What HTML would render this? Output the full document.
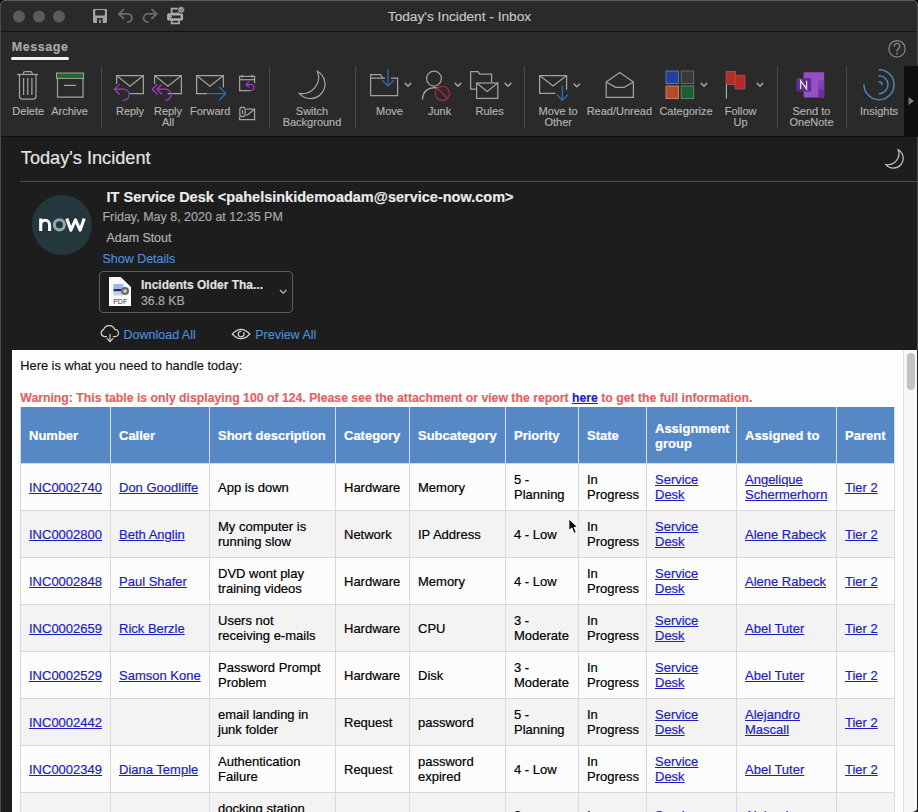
<!DOCTYPE html>
<html><head><meta charset="utf-8"><title>Today's Incident - Inbox</title>
<style>
html,body{margin:0;padding:0;width:918px;height:812px;overflow:hidden;background:#1d1d1d}
body{position:relative;font-family:"Liberation Sans", sans-serif}
.t{position:absolute;white-space:nowrap;-webkit-text-stroke:0.15px currentColor}
.r{position:absolute}
.c{-webkit-text-stroke:0.2px currentColor;position:absolute;display:flex;align-items:center;padding-left:8px;box-sizing:border-box;font-size:13px;line-height:15px;overflow:hidden}
u{text-decoration:underline;text-underline-offset:1px}
svg.ic{position:absolute;left:0;top:0}
</style></head><body>
<div class="r" style="left:0px;top:0px;width:918px;height:137px;background:#2a2a2a;"></div>
<div class="r" style="left:0px;top:31px;width:918px;height:1px;background:#121212;"></div>
<div class="r" style="left:0px;top:136px;width:918px;height:1px;background:#0c0c0c;"></div>
<div class="r" style="left:0px;top:137px;width:918px;height:675px;background:#1d1d1d;"></div>
<div class="r" style="left:0px;top:0px;width:918px;height:1px;background:#5e5e5e;"></div>
<div class="r" style="left:0px;top:0px;width:1px;height:812px;background:#4a4a4a;"></div>
<div class="r" style="left:917px;top:0px;width:1px;height:350px;background:#4a4a4a;"></div>
<div class="t" style="left:387.80px;top:9.70px;font-size:13.7px;line-height:13.7px;color:#c8c8c8;font-weight:400;">Today's Incident - Inbox</div>
<div class="t" style="left:11.80px;top:41.02px;font-size:12.5px;line-height:12.5px;color:#a9a9a9;font-weight:700;letter-spacing:0.55px">Message</div>
<div class="r" style="left:11px;top:57px;width:58px;height:3px;background:#f2f2f2;border-radius:1.5px"></div>
<div class="t" style="left:-71.75px;top:105.69px;width:200px;text-align:center;font-size:11px;line-height:11px;color:#b3b3b3;font-weight:400;">Delete</div>
<div class="t" style="left:-30.50px;top:105.69px;width:200px;text-align:center;font-size:11px;line-height:11px;color:#b3b3b3;font-weight:400;">Archive</div>
<div class="t" style="left:30.00px;top:105.69px;width:200px;text-align:center;font-size:11px;line-height:11px;color:#b3b3b3;font-weight:400;">Reply</div>
<div class="t" style="left:68.00px;top:105.69px;width:200px;text-align:center;font-size:11px;line-height:11px;color:#b3b3b3;font-weight:400;">Reply</div>
<div class="t" style="left:68.00px;top:117.29px;width:200px;text-align:center;font-size:11px;line-height:11px;color:#b3b3b3;font-weight:400;">All</div>
<div class="t" style="left:110.20px;top:105.69px;width:200px;text-align:center;font-size:11px;line-height:11px;color:#b3b3b3;font-weight:400;">Forward</div>
<div class="t" style="left:212.00px;top:105.69px;width:200px;text-align:center;font-size:11px;line-height:11px;color:#b3b3b3;font-weight:400;">Switch</div>
<div class="t" style="left:212.00px;top:117.29px;width:200px;text-align:center;font-size:11px;line-height:11px;color:#b3b3b3;font-weight:400;">Background</div>
<div class="t" style="left:289.50px;top:105.69px;width:200px;text-align:center;font-size:11px;line-height:11px;color:#b3b3b3;font-weight:400;">Move</div>
<div class="t" style="left:339.60px;top:105.69px;width:200px;text-align:center;font-size:11px;line-height:11px;color:#b3b3b3;font-weight:400;">Junk</div>
<div class="t" style="left:389.60px;top:105.69px;width:200px;text-align:center;font-size:11px;line-height:11px;color:#b3b3b3;font-weight:400;">Rules</div>
<div class="t" style="left:458.20px;top:105.69px;width:200px;text-align:center;font-size:11px;line-height:11px;color:#b3b3b3;font-weight:400;">Move to</div>
<div class="t" style="left:458.20px;top:117.29px;width:200px;text-align:center;font-size:11px;line-height:11px;color:#b3b3b3;font-weight:400;">Other</div>
<div class="t" style="left:519.40px;top:105.69px;width:200px;text-align:center;font-size:11px;line-height:11px;color:#b3b3b3;font-weight:400;">Read/Unread</div>
<div class="t" style="left:586.00px;top:105.69px;width:200px;text-align:center;font-size:11px;line-height:11px;color:#b3b3b3;font-weight:400;">Categorize</div>
<div class="t" style="left:640.60px;top:105.69px;width:200px;text-align:center;font-size:11px;line-height:11px;color:#b3b3b3;font-weight:400;">Follow</div>
<div class="t" style="left:640.60px;top:117.29px;width:200px;text-align:center;font-size:11px;line-height:11px;color:#b3b3b3;font-weight:400;">Up</div>
<div class="t" style="left:711.50px;top:105.69px;width:200px;text-align:center;font-size:11px;line-height:11px;color:#b3b3b3;font-weight:400;">Send to</div>
<div class="t" style="left:711.50px;top:117.29px;width:200px;text-align:center;font-size:11px;line-height:11px;color:#b3b3b3;font-weight:400;">OneNote</div>
<div class="t" style="left:779.00px;top:105.69px;width:200px;text-align:center;font-size:11px;line-height:11px;color:#b3b3b3;font-weight:400;">Insights</div>
<div class="r" style="left:101px;top:66px;width:1px;height:62px;background:#4a4a4a;"></div>
<div class="r" style="left:269px;top:66px;width:1px;height:62px;background:#4a4a4a;"></div>
<div class="r" style="left:355px;top:66px;width:1px;height:62px;background:#4a4a4a;"></div>
<div class="r" style="left:524px;top:66px;width:1px;height:62px;background:#4a4a4a;"></div>
<div class="r" style="left:777px;top:66px;width:1px;height:62px;background:#4a4a4a;"></div>
<div class="r" style="left:846px;top:66px;width:1px;height:62px;background:#4a4a4a;"></div>
<div class="r" style="left:904px;top:66px;width:14px;height:71px;background:#0f0f0f;"></div>
<div class="t" style="left:20.80px;top:149.49px;font-size:18.2px;line-height:18.2px;color:#e6e6e6;font-weight:400;">Today's Incident</div>
<div class="r" style="left:20px;top:181px;width:898px;height:1px;background:#4d4d4d;"></div>
<div class="t" style="left:106.60px;top:189.73px;font-size:14.5px;line-height:14.5px;color:#ececec;font-weight:700;">IT Service Desk &lt;pahelsinkidemoadam@service-now.com&gt;</div>
<div class="t" style="left:102.40px;top:210.62px;font-size:12.5px;line-height:12.5px;color:#ababab;font-weight:400;">Friday, May 8, 2020 at 12:35 PM</div>
<div class="t" style="left:106.60px;top:232.10px;font-size:12.4px;line-height:12.4px;color:#b5b5b5;font-weight:400;">Adam Stout</div>
<div class="t" style="left:102.40px;top:252.92px;font-size:12.5px;line-height:12.5px;color:#4a8fdc;font-weight:400;">Show Details</div>
<div class="r" style="left:99px;top:271px;width:192px;height:40px;border:1px solid #5a5a5a;border-radius:4px"></div>
<div class="t" style="left:141.00px;top:278.84px;font-size:12px;line-height:12px;color:#e2e2e2;font-weight:700;">Incidents Older Tha...</div>
<div class="t" style="left:141.00px;top:294.89px;font-size:12.3px;line-height:12.3px;color:#a9a9a9;font-weight:400;">36.8 KB</div>
<div class="t" style="left:123.50px;top:329.42px;font-size:12.5px;line-height:12.5px;color:#4a8fdc;font-weight:400;">Download All</div>
<div class="t" style="left:255.20px;top:329.42px;font-size:12.5px;line-height:12.5px;color:#4a8fdc;font-weight:400;">Preview All</div>
<div class="r" style="left:12px;top:350px;width:891px;height:462px;background:#fdfdfd;"></div>
<div class="r" style="left:903px;top:350px;width:14px;height:462px;background:#f7f7f7;"></div>
<div class="r" style="left:903px;top:350px;width:1px;height:462px;background:#e2e2e2;"></div>
<div class="r" style="left:907px;top:353px;width:8px;height:37px;background:#c3c3c3;border-radius:4px"></div>
<div class="t" style="left:20.30px;top:360.36px;font-size:12.8px;line-height:12.8px;color:#111;font-weight:400;">Here is what you need to handle today:</div>
<div class="t" style="left:20.30px;top:391.63px;font-size:12.25px;line-height:12.25px;color:#e5605f;font-weight:700;">Warning: This table is only displaying 100 of 124. Please see the attachment or view the report <span style="color:#1d1dc4;text-decoration:underline">here</span> to get the full information.</div>
<div class="r" style="left:20px;top:407px;width:874px;height:56px;background:#5688c6;"></div>
<div class="r" style="left:20px;top:463px;width:874px;height:47px;background:#fcfcfc;"></div>
<div class="r" style="left:20px;top:510px;width:874px;height:47px;background:#f3f3f4;"></div>
<div class="r" style="left:20px;top:557px;width:874px;height:47px;background:#fcfcfc;"></div>
<div class="r" style="left:20px;top:604px;width:874px;height:47px;background:#f3f3f4;"></div>
<div class="r" style="left:20px;top:651px;width:874px;height:47px;background:#fcfcfc;"></div>
<div class="r" style="left:20px;top:698px;width:874px;height:47px;background:#f3f3f4;"></div>
<div class="r" style="left:20px;top:745px;width:874px;height:47px;background:#fcfcfc;"></div>
<div class="r" style="left:20px;top:792px;width:874px;height:61px;background:#f3f3f4;"></div>
<div class="c" style="left:21px;top:408px;width:89px;height:55px;color:#ffffff;font-weight:700;"><div>Number</div></div>
<div class="c" style="left:111px;top:408px;width:98px;height:55px;color:#ffffff;font-weight:700;"><div>Caller</div></div>
<div class="c" style="left:210px;top:408px;width:125px;height:55px;color:#ffffff;font-weight:700;"><div>Short description</div></div>
<div class="c" style="left:336px;top:408px;width:73px;height:55px;color:#ffffff;font-weight:700;"><div>Category</div></div>
<div class="c" style="left:410px;top:408px;width:95px;height:55px;color:#ffffff;font-weight:700;"><div>Subcategory</div></div>
<div class="c" style="left:506px;top:408px;width:72px;height:55px;color:#ffffff;font-weight:700;"><div>Priority</div></div>
<div class="c" style="left:579px;top:408px;width:67px;height:55px;color:#ffffff;font-weight:700;"><div>State</div></div>
<div class="c" style="left:647px;top:408px;width:89px;height:55px;color:#ffffff;font-weight:700;"><div>Assignment<br>group</div></div>
<div class="c" style="left:737px;top:408px;width:99px;height:55px;color:#ffffff;font-weight:700;"><div>Assigned to</div></div>
<div class="c" style="left:837px;top:408px;width:57px;height:55px;color:#ffffff;font-weight:700;"><div>Parent</div></div>
<div class="c" style="left:21px;top:464px;width:89px;height:46px;color:#1e1ebe;font-weight:400;"><div><u>INC0002740</u></div></div>
<div class="c" style="left:111px;top:464px;width:98px;height:46px;color:#1e1ebe;font-weight:400;"><div><u>Don Goodliffe</u></div></div>
<div class="c" style="left:210px;top:464px;width:125px;height:46px;color:#000;font-weight:400;"><div>App is down</div></div>
<div class="c" style="left:336px;top:464px;width:73px;height:46px;color:#000;font-weight:400;"><div>Hardware</div></div>
<div class="c" style="left:410px;top:464px;width:95px;height:46px;color:#000;font-weight:400;"><div>Memory</div></div>
<div class="c" style="left:506px;top:464px;width:72px;height:46px;color:#000;font-weight:400;"><div>5 -<br>Planning</div></div>
<div class="c" style="left:579px;top:464px;width:67px;height:46px;color:#000;font-weight:400;"><div>In<br>Progress</div></div>
<div class="c" style="left:647px;top:464px;width:89px;height:46px;color:#1e1ebe;font-weight:400;"><div><u>Service<br>Desk</u></div></div>
<div class="c" style="left:737px;top:464px;width:99px;height:46px;color:#1e1ebe;font-weight:400;"><div><u>Angelique<br>Schermerhorn</u></div></div>
<div class="c" style="left:837px;top:464px;width:57px;height:46px;color:#1e1ebe;font-weight:400;"><div><u>Tier 2</u></div></div>
<div class="c" style="left:21px;top:511px;width:89px;height:46px;color:#1e1ebe;font-weight:400;"><div><u>INC0002800</u></div></div>
<div class="c" style="left:111px;top:511px;width:98px;height:46px;color:#1e1ebe;font-weight:400;"><div><u>Beth Anglin</u></div></div>
<div class="c" style="left:210px;top:511px;width:125px;height:46px;color:#000;font-weight:400;"><div>My computer is<br>running slow</div></div>
<div class="c" style="left:336px;top:511px;width:73px;height:46px;color:#000;font-weight:400;"><div>Network</div></div>
<div class="c" style="left:410px;top:511px;width:95px;height:46px;color:#000;font-weight:400;"><div>IP Address</div></div>
<div class="c" style="left:506px;top:511px;width:72px;height:46px;color:#000;font-weight:400;"><div>4 - Low</div></div>
<div class="c" style="left:579px;top:511px;width:67px;height:46px;color:#000;font-weight:400;"><div>In<br>Progress</div></div>
<div class="c" style="left:647px;top:511px;width:89px;height:46px;color:#1e1ebe;font-weight:400;"><div><u>Service<br>Desk</u></div></div>
<div class="c" style="left:737px;top:511px;width:99px;height:46px;color:#1e1ebe;font-weight:400;"><div><u>Alene Rabeck</u></div></div>
<div class="c" style="left:837px;top:511px;width:57px;height:46px;color:#1e1ebe;font-weight:400;"><div><u>Tier 2</u></div></div>
<div class="c" style="left:21px;top:558px;width:89px;height:46px;color:#1e1ebe;font-weight:400;"><div><u>INC0002848</u></div></div>
<div class="c" style="left:111px;top:558px;width:98px;height:46px;color:#1e1ebe;font-weight:400;"><div><u>Paul Shafer</u></div></div>
<div class="c" style="left:210px;top:558px;width:125px;height:46px;color:#000;font-weight:400;"><div>DVD wont play<br>training videos</div></div>
<div class="c" style="left:336px;top:558px;width:73px;height:46px;color:#000;font-weight:400;"><div>Hardware</div></div>
<div class="c" style="left:410px;top:558px;width:95px;height:46px;color:#000;font-weight:400;"><div>Memory</div></div>
<div class="c" style="left:506px;top:558px;width:72px;height:46px;color:#000;font-weight:400;"><div>4 - Low</div></div>
<div class="c" style="left:579px;top:558px;width:67px;height:46px;color:#000;font-weight:400;"><div>In<br>Progress</div></div>
<div class="c" style="left:647px;top:558px;width:89px;height:46px;color:#1e1ebe;font-weight:400;"><div><u>Service<br>Desk</u></div></div>
<div class="c" style="left:737px;top:558px;width:99px;height:46px;color:#1e1ebe;font-weight:400;"><div><u>Alene Rabeck</u></div></div>
<div class="c" style="left:837px;top:558px;width:57px;height:46px;color:#1e1ebe;font-weight:400;"><div><u>Tier 2</u></div></div>
<div class="c" style="left:21px;top:605px;width:89px;height:46px;color:#1e1ebe;font-weight:400;"><div><u>INC0002659</u></div></div>
<div class="c" style="left:111px;top:605px;width:98px;height:46px;color:#1e1ebe;font-weight:400;"><div><u>Rick Berzle</u></div></div>
<div class="c" style="left:210px;top:605px;width:125px;height:46px;color:#000;font-weight:400;"><div>Users not<br>receiving e-mails</div></div>
<div class="c" style="left:336px;top:605px;width:73px;height:46px;color:#000;font-weight:400;"><div>Hardware</div></div>
<div class="c" style="left:410px;top:605px;width:95px;height:46px;color:#000;font-weight:400;"><div>CPU</div></div>
<div class="c" style="left:506px;top:605px;width:72px;height:46px;color:#000;font-weight:400;"><div>3 -<br>Moderate</div></div>
<div class="c" style="left:579px;top:605px;width:67px;height:46px;color:#000;font-weight:400;"><div>In<br>Progress</div></div>
<div class="c" style="left:647px;top:605px;width:89px;height:46px;color:#1e1ebe;font-weight:400;"><div><u>Service<br>Desk</u></div></div>
<div class="c" style="left:737px;top:605px;width:99px;height:46px;color:#1e1ebe;font-weight:400;"><div><u>Abel Tuter</u></div></div>
<div class="c" style="left:837px;top:605px;width:57px;height:46px;color:#1e1ebe;font-weight:400;"><div><u>Tier 2</u></div></div>
<div class="c" style="left:21px;top:652px;width:89px;height:46px;color:#1e1ebe;font-weight:400;"><div><u>INC0002529</u></div></div>
<div class="c" style="left:111px;top:652px;width:98px;height:46px;color:#1e1ebe;font-weight:400;"><div><u>Samson Kone</u></div></div>
<div class="c" style="left:210px;top:652px;width:125px;height:46px;color:#000;font-weight:400;"><div>Password Prompt<br>Problem</div></div>
<div class="c" style="left:336px;top:652px;width:73px;height:46px;color:#000;font-weight:400;"><div>Hardware</div></div>
<div class="c" style="left:410px;top:652px;width:95px;height:46px;color:#000;font-weight:400;"><div>Disk</div></div>
<div class="c" style="left:506px;top:652px;width:72px;height:46px;color:#000;font-weight:400;"><div>3 -<br>Moderate</div></div>
<div class="c" style="left:579px;top:652px;width:67px;height:46px;color:#000;font-weight:400;"><div>In<br>Progress</div></div>
<div class="c" style="left:647px;top:652px;width:89px;height:46px;color:#1e1ebe;font-weight:400;"><div><u>Service<br>Desk</u></div></div>
<div class="c" style="left:737px;top:652px;width:99px;height:46px;color:#1e1ebe;font-weight:400;"><div><u>Abel Tuter</u></div></div>
<div class="c" style="left:837px;top:652px;width:57px;height:46px;color:#1e1ebe;font-weight:400;"><div><u>Tier 2</u></div></div>
<div class="c" style="left:21px;top:699px;width:89px;height:46px;color:#1e1ebe;font-weight:400;"><div><u>INC0002442</u></div></div>
<div class="c" style="left:111px;top:699px;width:98px;height:46px;color:#000;font-weight:400;"><div></div></div>
<div class="c" style="left:210px;top:699px;width:125px;height:46px;color:#000;font-weight:400;"><div>email landing in<br>junk folder</div></div>
<div class="c" style="left:336px;top:699px;width:73px;height:46px;color:#000;font-weight:400;"><div>Request</div></div>
<div class="c" style="left:410px;top:699px;width:95px;height:46px;color:#000;font-weight:400;"><div>password</div></div>
<div class="c" style="left:506px;top:699px;width:72px;height:46px;color:#000;font-weight:400;"><div>5 -<br>Planning</div></div>
<div class="c" style="left:579px;top:699px;width:67px;height:46px;color:#000;font-weight:400;"><div>In<br>Progress</div></div>
<div class="c" style="left:647px;top:699px;width:89px;height:46px;color:#1e1ebe;font-weight:400;"><div><u>Service<br>Desk</u></div></div>
<div class="c" style="left:737px;top:699px;width:99px;height:46px;color:#1e1ebe;font-weight:400;"><div><u>Alejandro<br>Mascall</u></div></div>
<div class="c" style="left:837px;top:699px;width:57px;height:46px;color:#1e1ebe;font-weight:400;"><div><u>Tier 2</u></div></div>
<div class="c" style="left:21px;top:746px;width:89px;height:46px;color:#1e1ebe;font-weight:400;"><div><u>INC0002349</u></div></div>
<div class="c" style="left:111px;top:746px;width:98px;height:46px;color:#1e1ebe;font-weight:400;"><div><u>Diana Temple</u></div></div>
<div class="c" style="left:210px;top:746px;width:125px;height:46px;color:#000;font-weight:400;"><div>Authentication<br>Failure</div></div>
<div class="c" style="left:336px;top:746px;width:73px;height:46px;color:#000;font-weight:400;"><div>Request</div></div>
<div class="c" style="left:410px;top:746px;width:95px;height:46px;color:#000;font-weight:400;"><div>password<br>expired</div></div>
<div class="c" style="left:506px;top:746px;width:72px;height:46px;color:#000;font-weight:400;"><div>4 - Low</div></div>
<div class="c" style="left:579px;top:746px;width:67px;height:46px;color:#000;font-weight:400;"><div>In<br>Progress</div></div>
<div class="c" style="left:647px;top:746px;width:89px;height:46px;color:#1e1ebe;font-weight:400;"><div><u>Service<br>Desk</u></div></div>
<div class="c" style="left:737px;top:746px;width:99px;height:46px;color:#1e1ebe;font-weight:400;"><div><u>Abel Tuter</u></div></div>
<div class="c" style="left:837px;top:746px;width:57px;height:46px;color:#1e1ebe;font-weight:400;"><div><u>Tier 2</u></div></div>
<div class="c" style="left:21px;top:793px;width:89px;height:60px;color:#1e1ebe;font-weight:400;"><div><u>INC0002330</u></div></div>
<div class="c" style="left:111px;top:793px;width:98px;height:60px;color:#1e1ebe;font-weight:400;"><div><u>Bow Ruggeri</u></div></div>
<div class="c" style="left:210px;top:793px;width:125px;height:60px;color:#000;font-weight:400;"><div>docking station<br>not working<br>properly</div></div>
<div class="c" style="left:336px;top:793px;width:73px;height:60px;color:#000;font-weight:400;"><div>Hardware</div></div>
<div class="c" style="left:410px;top:793px;width:95px;height:60px;color:#000;font-weight:400;"><div>Dock</div></div>
<div class="c" style="left:506px;top:793px;width:72px;height:60px;color:#000;font-weight:400;"><div>3 -<br>Moderate</div></div>
<div class="c" style="left:579px;top:793px;width:67px;height:60px;color:#000;font-weight:400;"><div>In<br>Progress</div></div>
<div class="c" style="left:647px;top:793px;width:89px;height:60px;color:#1e1ebe;font-weight:400;"><div><u>Service<br>Desk</u></div></div>
<div class="c" style="left:737px;top:793px;width:99px;height:60px;color:#1e1ebe;font-weight:400;"><div><u>Alejandro<br>Mascall</u></div></div>
<div class="c" style="left:837px;top:793px;width:57px;height:60px;color:#1e1ebe;font-weight:400;"><div><u>Tier 2</u></div></div>
<div class="r" style="left:20px;top:407px;width:1px;height:405px;background:#d9d9dd;"></div>
<div class="r" style="left:110px;top:407px;width:1px;height:405px;background:#d9d9dd;"></div>
<div class="r" style="left:209px;top:407px;width:1px;height:405px;background:#d9d9dd;"></div>
<div class="r" style="left:335px;top:407px;width:1px;height:405px;background:#d9d9dd;"></div>
<div class="r" style="left:409px;top:407px;width:1px;height:405px;background:#d9d9dd;"></div>
<div class="r" style="left:505px;top:407px;width:1px;height:405px;background:#d9d9dd;"></div>
<div class="r" style="left:578px;top:407px;width:1px;height:405px;background:#d9d9dd;"></div>
<div class="r" style="left:646px;top:407px;width:1px;height:405px;background:#d9d9dd;"></div>
<div class="r" style="left:736px;top:407px;width:1px;height:405px;background:#d9d9dd;"></div>
<div class="r" style="left:836px;top:407px;width:1px;height:405px;background:#d9d9dd;"></div>
<div class="r" style="left:894px;top:407px;width:1px;height:405px;background:#d9d9dd;"></div>
<div class="r" style="left:20px;top:463px;width:875px;height:1px;background:#d9d9dd;"></div>
<div class="r" style="left:20px;top:510px;width:875px;height:1px;background:#d9d9dd;"></div>
<div class="r" style="left:20px;top:557px;width:875px;height:1px;background:#d9d9dd;"></div>
<div class="r" style="left:20px;top:604px;width:875px;height:1px;background:#d9d9dd;"></div>
<div class="r" style="left:20px;top:651px;width:875px;height:1px;background:#d9d9dd;"></div>
<div class="r" style="left:20px;top:698px;width:875px;height:1px;background:#d9d9dd;"></div>
<div class="r" style="left:20px;top:745px;width:875px;height:1px;background:#d9d9dd;"></div>
<div class="r" style="left:20px;top:792px;width:875px;height:1px;background:#d9d9dd;"></div>
<div class="r" style="left:20px;top:853px;width:875px;height:1px;background:#d9d9dd;"></div>
<div class="r" style="left:110px;top:407px;width:1px;height:56px;background:#d6e2f0;"></div>
<div class="r" style="left:209px;top:407px;width:1px;height:56px;background:#d6e2f0;"></div>
<div class="r" style="left:335px;top:407px;width:1px;height:56px;background:#d6e2f0;"></div>
<div class="r" style="left:409px;top:407px;width:1px;height:56px;background:#d6e2f0;"></div>
<div class="r" style="left:505px;top:407px;width:1px;height:56px;background:#d6e2f0;"></div>
<div class="r" style="left:578px;top:407px;width:1px;height:56px;background:#d6e2f0;"></div>
<div class="r" style="left:646px;top:407px;width:1px;height:56px;background:#d6e2f0;"></div>
<div class="r" style="left:736px;top:407px;width:1px;height:56px;background:#d6e2f0;"></div>
<div class="r" style="left:836px;top:407px;width:1px;height:56px;background:#d6e2f0;"></div>
<svg class="ic" width="918" height="812" viewBox="0 0 918 812">
<!-- traffic lights -->
<circle cx="19" cy="16.5" r="6" fill="#5b5b5b"/>
<circle cx="39" cy="16.5" r="6" fill="#5b5b5b"/>
<circle cx="59" cy="16.5" r="6" fill="#5b5b5b"/>
<!-- save -->
<rect x="93" y="9" width="14" height="14" rx="1" fill="#a4a4a4"/>
<rect x="95.2" y="10" width="9.7" height="5.4" rx="1" fill="#2b2b2b"/>
<rect x="97" y="18" width="5.7" height="5" fill="#2b2b2b"/>
<rect x="99.2" y="19.6" width="1.6" height="3.4" fill="#a4a4a4"/>
<!-- undo / redo -->
<g fill="none" stroke="#6c6c6c" stroke-width="1.9" stroke-linecap="round" stroke-linejoin="round">
<path d="M123.5 9.6 L118.8 13.9 L123.5 18.3 M118.8 13.9 H127.8 A4.1 4.1 0 0 1 127.8 22.1 H127.6"/>
<path d="M152 9.6 L156.7 13.9 L152 18.3 M156.7 13.9 H147.7 A4.1 4.1 0 0 0 147.7 22.1 H147.9"/>
</g>
<!-- printer -->
<g fill="none" stroke="#adadad" stroke-width="1.7">
<rect x="171.6" y="8.6" width="7" height="5"/>
<rect x="171.6" y="19.8" width="7.5" height="3.6"/>
</g>
<path d="M168.8 13.2 H181.4 A1.7 1.7 0 0 1 183.1 14.9 V18.9 A1.7 1.7 0 0 1 181.4 20.6 H168.8 A1.7 1.7 0 0 1 167.1 18.9 V14.9 A1.7 1.7 0 0 1 168.8 13.2 Z M170.6 15.4 V18.3 H180.6 V15.4 Z" fill="#adadad" fill-rule="evenodd"/>
<circle cx="171.3" cy="16.5" r="0.7" fill="#cfcfcf"/>
<circle cx="181.2" cy="9.8" r="3.3" fill="#a8a8a8" stroke="#2b2b2b" stroke-width="0.8"/>
<path d="M179.6 9.9 L180.8 11 L182.8 8.7" fill="none" stroke="#3a3a3a" stroke-width="0.9"/>
<!-- help -->
<circle cx="897" cy="48.8" r="8.2" fill="none" stroke="#8c8c8c" stroke-width="1.2"/>
<path d="M894.2 46.2 A2.8 2.8 0 1 1 898.6 48.5 Q897 49.5 897 51" fill="none" stroke="#8c8c8c" stroke-width="1.3" stroke-linecap="round"/>
<circle cx="897" cy="53.6" r="0.85" fill="#8c8c8c"/>

<g fill="none" stroke="#a2a2a2" stroke-width="1.25">
<!-- trash -->
<path d="M23.5 74.5 V73 Q23.5 71.5 25 71.5 H30.5 Q32 71.5 32 73 V74.5"/>
<path d="M17 74.5 H38"/>
<path d="M19.5 74.5 V96.2 Q19.5 99 22.3 99 H33.2 Q36 99 36 96.2 V74.5"/>
<path d="M23.6 78 V95 M27.75 78 V95 M31.9 78 V95"/>
<!-- archive -->
<path d="M57.5 78.6 V97 H83 V78.6"/>
<path d="M64 85.4 H76"/>
<!-- reply envelope -->
<path d="M116.6 84 V75.6 H143.4 V93.6 H129.6"/>
<path d="M116.6 75.6 L130 86.2 L143.4 75.6"/>
<!-- reply all envelope -->
<path d="M154.6 84 V75.6 H181.4 V93.6 H167.6"/>
<path d="M154.6 75.6 L168 86.2 L181.4 75.6"/>
<!-- forward envelope -->
<path d="M207 93.6 H196.6 V75.6 H223.4 V87.5"/>
<path d="M196.6 75.6 L210 86.2 L223.4 75.6"/>
<!-- calendar -->
<path d="M250.6 90.6 H239.6 V76.4 H254.6 V83.2"/>
<path d="M239.6 79.7 H254.6"/>
<path d="M242.3 74.8 V77.6 M251.9 74.8 V77.6"/>
<!-- attach mail -->
<path d="M239.8 109.9 A2.7 2.7 0 0 1 245.2 109.9 V114 A2.7 2.7 0 0 1 239.8 114 Z"/>
<path d="M242.5 109.8 V114.2"/>
<path d="M246.4 109.2 H254.6 V119.6 H239.6 V116.6"/>
<path d="M246.6 115.4 L254.3 109.6"/>
<!-- moon -->
<path d="M317.4 71.3 A14.5 14.5 0 1 1 299.3 93.3 A16.3 16.3 0 0 0 317.4 71.3 Z"/>
<!-- move folder -->
<path d="M385 78 H370.6 V95.6 H397.6 V78 H391"/>
<path d="M370.6 78 V74.6 H380.6 L382.6 78"/>
<!-- junk person -->
<circle cx="434" cy="78.6" r="7.4"/>
<path d="M422.4 99.6 Q423 88.4 434 87.6 Q437 87.7 438.2 88.2"/>
<!-- rules -->
<path d="M476 89 H470.6 V71.6 H478.2 L479.6 74.2 H491.6 V82.4"/>
<rect x="476.6" y="83" width="21.2" height="15.4"/>
<path d="M476.6 83 L487.2 91.5 L497.8 83"/>
<!-- move to other envelope -->
<path d="M555.4 93.4 H539.6 V75.6 H566.6 V89.8"/>
<path d="M539.6 75.6 L553.1 86 L566.6 75.6"/>
<!-- read/unread -->
<path d="M606.2 82 L619.8 72.4 L633.4 82 V97.4 H606.2 Z"/>
<path d="M606.2 82 L615.6 87.4 H624 L633.4 82"/>
<!-- header moon -->
<g transform="translate(886 149.8) scale(0.67) translate(-299.3 -71.3)"><path d="M317.4 71.3 A14.5 14.5 0 1 1 299.3 93.3 A16.3 16.3 0 0 0 317.4 71.3 Z" stroke="#c4c4c4" stroke-width="1.8"/></g>
</g>
<!-- chevrons -->
<g fill="none" stroke="#a2a2a2" stroke-width="1.5" stroke-linecap="round" stroke-linejoin="round">
<path d="M405.2 83.4 L408 86.2 L410.8 83.4"/>
<path d="M455.2 83.4 L458 86.2 L460.8 83.4"/>
<path d="M505.2 83.4 L508 86.2 L510.8 83.4"/>
<path d="M574 84 L576.8 86.8 L579.6 84"/>
<path d="M701.2 83.4 L704 86.2 L706.8 83.4"/>
<path d="M757.2 83.4 L760 86.2 L762.8 83.4"/>
<path d="M280.4 290.4 L283.2 293.2 L286 290.4"/>
</g>
<!-- archive green bar -->
<rect x="56.5" y="73" width="27" height="5.4" fill="#23692f" stroke="#a2a2a2" stroke-width="1"/>
<!-- purple reply arrows -->
<g fill="none" stroke="#9a3cc2" stroke-width="1.25" stroke-linecap="round" stroke-linejoin="round">
<path d="M119.4 84.4 L114.4 89.2 L119.4 94.2 M114.4 89.2 H123.6 A5.6 5.6 0 0 1 123.6 100.4"/>
<path d="M157.2 84.4 L152.2 89.2 L157.2 94.2 M161.8 84.4 L156.8 89.2 L161.8 94.2 M156.8 89.2 H165.4 A5.6 5.6 0 0 1 165.4 100.4"/>
<path d="M248.8 82 L245.9 84.6 L248.8 87.2 M245.9 84.6 H251 A3 3 0 0 1 251 90.6"/>
</g>
<!-- blue arrows -->
<g fill="none" stroke="#3068b2" stroke-width="1.35" stroke-linecap="round" stroke-linejoin="round">
<path d="M207.6 93.6 H225.6 M219.4 87.2 L225.8 93.6 L219.4 100"/>
<path d="M388 69.6 V86 M382.4 80.4 L388 86 L393.6 80.4"/>
<path d="M562.4 85.8 V100.2 M557.4 95.2 L562.4 100.2 L567.4 95.2"/>
</g>
<!-- junk red no sign -->
<circle cx="442.5" cy="93.4" r="7.1" fill="#2a2a2a" stroke="#a52a40" stroke-width="1.3"/>
<path d="M437.6 88.5 L447.4 98.3" stroke="#a52a40" stroke-width="1.3"/>
<!-- categorize -->
<rect x="666" y="71" width="12.5" height="12.6" fill="#22409c" stroke="#5c7cc0" stroke-width="0.9"/>
<rect x="681.2" y="71" width="12.5" height="12.6" fill="#3a3a3a" stroke="#6e6e6e" stroke-width="0.9"/>
<rect x="666" y="86" width="12.5" height="12.6" fill="#b44a2c" stroke="#d48a5a" stroke-width="0.9"/>
<rect x="681.2" y="86" width="12.5" height="12.6" fill="#1f5f2f" stroke="#6a8a6a" stroke-width="0.9"/>
<!-- follow up flag -->
<path d="M726.4 84 V98.4" stroke="#b8b8b8" stroke-width="1.1"/>
<path d="M726.2 71.4 H735.4 V84.4 H726.2 Z" fill="#b42c24" stroke="#c86060" stroke-width="0.7"/>
<path d="M735 75.2 H745 V89 H735 Z" fill="#b42c24" stroke="#a05a7a" stroke-width="0.7"/>
<!-- onenote -->
<rect x="803.6" y="72.2" width="20.6" height="25.4" rx="0.8" fill="#9550c6"/>
<rect x="818.4" y="80.5" width="5.8" height="8.6" fill="#8040b0"/>
<rect x="818.4" y="89.2" width="5.8" height="8.4" fill="#6c2e9e"/>
<rect x="796.3" y="78" width="14.8" height="13.6" rx="0.8" fill="#5e2c94"/>
<path d="M800.6 89 V80.8 L806.6 89 V80.8" fill="none" stroke="#e6dcf0" stroke-width="1.3"/>
<!-- insights -->
<g fill="none" stroke="#4f84b6" stroke-width="1.5" stroke-linecap="round">
<path d="M879 69.7 A15 15 0 1 1 864 84.7"/>
<path d="M879 75.7 A9 9 0 0 1 879 93.7"/>
<path d="M879 81.7 A3 3 0 0 1 882 84.7"/>
</g>
<!-- ribbon right triangle -->
<path d="M908.5 97 L914 101 L908.5 105 Z" fill="#7b7b7b"/>
<!-- avatar -->
<circle cx="62" cy="225" r="30" fill="#24373c"/>
<g fill="none" stroke-width="3.1">
<path d="M40.7 218.4 V231 M40.7 225.2 A4.45 5 0 0 1 49.6 225.2 V231" stroke="#ffffff"/>
<circle cx="59.4" cy="224.8" r="5.1" stroke="#8aa8b2"/>
<path d="M66.8 218.6 L70.9 230.2 L75.5 219.8 L80.1 230.2 L84.2 218.6" stroke="#ffffff" stroke-linejoin="round"/>
</g>
<!-- pdf icon -->
<path d="M109 277 H120.7 L131 286.9 V306 H109 Z" fill="#fafafa"/>
<rect x="113.5" y="284" width="10" height="5" fill="#9ab8e8"/>
<rect x="113.5" y="289" width="8" height="2.5" fill="#1a2a80"/>
<rect x="113.5" y="291.5" width="9" height="4" fill="#c8d0dc"/>
<circle cx="125" cy="291" r="4" fill="#6a6a6a"/>
<circle cx="125" cy="291" r="1.8" fill="#d8d8d8"/>
<text x="120.2" y="304.4" font-family="Liberation Sans" font-size="7" fill="#3a3a3a" text-anchor="middle">PDF</text>
<!-- cloud -->
<g fill="none" stroke="#d2d2d2" stroke-width="1.2" stroke-linecap="round">
<path d="M106.5 336.6 H104.4 A3.6 3.6 0 0 1 103.6 329.6 A5.8 5.8 0 0 1 114.6 329.4 A3.6 3.6 0 0 1 115.2 336.6 H113.4"/>
<path d="M110 334.5 V341"/>
<path d="M107.2 338.6 L110 341.6 L112.8 338.6"/>
<!-- eye -->
<path d="M232.3 334 Q241 324.6 249.8 334 Q241 343.4 232.3 334 Z"/>
<path d="M243.7 332.6 A2.9 2.9 0 1 1 241 331.1" stroke-width="1.3"/>
</g>

<!-- window corners -->
<path d="M0 0 H5.5 A5.5 5.5 0 0 0 0 5.5 Z" fill="#0a0a0a"/>
<path d="M0.5 5.5 A5 5 0 0 1 5.5 0.5" fill="none" stroke="#5e5e5e" stroke-width="1"/>
<path d="M918 0 H912.5 A5.5 5.5 0 0 1 918 5.5 Z" fill="#0a0a0a"/>
<path d="M912.5 0.5 A5 5 0 0 1 917.5 5.5" fill="none" stroke="#5e5e5e" stroke-width="1"/>
<path d="M918 812 V806 A6 6 0 0 1 912 812 Z" fill="#2a2a2a"/>
<!-- cursor -->
<path d="M568.8 518.6 V531 L571.8 528.2 L574 533.4 L576.4 532.4 L574.2 527.4 H578.2 Z" fill="#000" stroke="#fff" stroke-width="1.1" stroke-linejoin="round"/>

</svg>
</body></html>
